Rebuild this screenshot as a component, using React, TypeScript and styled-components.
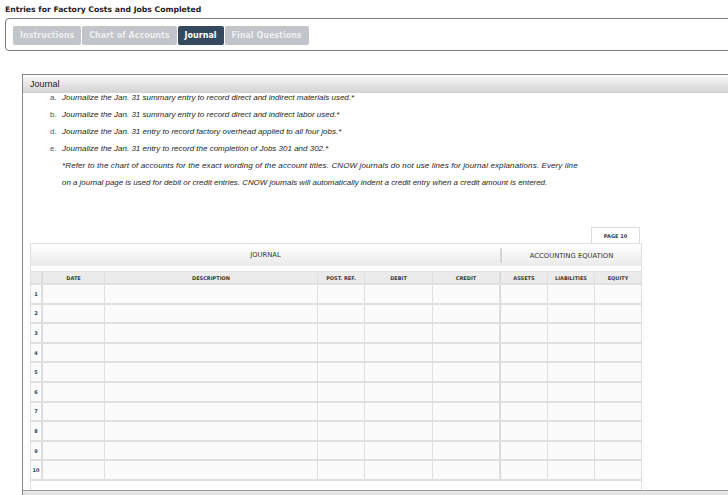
import styled, { createGlobalStyle } from "styled-components";

const GlobalStyle = createGlobalStyle`
  *, *::before, *::after {
    box-sizing: border-box;
  }
  html, body {
    margin: 0;
    padding: 0;
    background: #ffffff;
    overflow: hidden;
  }
  body {
    font-family: "Liberation Sans", Arial, sans-serif;
    color: #222222;
  }
`;

const tabs = ["Instructions", "Chart of Accounts", "Journal", "Final Questions"];

const steps = [
  { mark: "a.", text: "Journalize the Jan. 31 summary entry to record direct and indirect materials used.*" },
  { mark: "b.", text: "Journalize the Jan. 31 summary entry to record direct and indirect labor used.*" },
  { mark: "d.", text: "Journalize the Jan. 31 entry to record factory overhead applied to all four jobs.*" },
  { mark: "e.", text: "Journalize the Jan. 31 entry to record the completion of Jobs 301 and 302.*" },
];

const columns = [
  { label: "", thick: false },
  { label: "DATE", thick: true },
  { label: "DESCRIPTION", thick: false },
  { label: "POST. REF.", thick: false },
  { label: "DEBIT", thick: false },
  { label: "CREDIT", thick: false },
  { label: "ASSETS", thick: true },
  { label: "LIABILITIES", thick: false },
  { label: "EQUITY", thick: false },
];

const rows = Array.from({ length: 10 }, (_, i) => i + 1);

const App = () => {
  return (
    <Page>
      <GlobalStyle />
      <Title>Entries for Factory Costs and Jobs Completed</Title>
      <TabBar>
        {tabs.map((t) => (
          <Tab key={t} $active={t === "Journal"}>
            {t}
          </Tab>
        ))}
      </TabBar>

      <Panel>
        <PanelHeader>Journal</PanelHeader>
        <PanelBody>
          <Steps>
            {steps.map((s) => (
              <Step key={s.mark}>
                <Mark>{s.mark}</Mark>
                <em>{s.text}</em>
              </Step>
            ))}
            <NoteLine $spread>
              *Refer to the chart of accounts for the exact wording of the account titles. CNOW journals do not use
              lines for journal explanations. Every line
            </NoteLine>
            <NoteLine>
              on a journal page is used for debit or credit entries. CNOW journals will automatically indent a credit
              entry when a credit amount is entered.
            </NoteLine>
          </Steps>

          <JournalWrap>
            <PageTab>PAGE 10</PageTab>
            <JournalTable>
              <Banner>
                <BannerCell $w={469}>JOURNAL</BannerCell>
                <BannerCell $w={141} $divider>
                  ACCOUNTING EQUATION
                </BannerCell>
              </Banner>
              <Spacer />
              <Grid>
                {columns.map((c, i) => (
                  <HeadCell key={"h" + i} $thick={c.thick}>
                    {c.label}
                  </HeadCell>
                ))}
                {rows.map((r) =>
                  columns.map((c, i) => (
                    <Cell key={r + "-" + i} $thick={c.thick}>
                      {i === 0 ? r : ""}
                    </Cell>
                  ))
                )}
              </Grid>
            </JournalTable>
          </JournalWrap>
        </PanelBody>
        <PanelFooter />
      </Panel>
    </Page>
  );
};
export default App;

const Page = styled.div`
  padding-top: 4px;
  width: 760px;
`;

const Title = styled.h1`
  margin: 0 0 3px 5px;
  font-family: "DejaVu Sans", Verdana, sans-serif;
  font-size: 7.7px;
  line-height: 11px;
  font-weight: 700;
  color: #222222;
`;

const TabBar = styled.div`
  margin-left: 5px;
  width: 740px;
  border: 1px solid #7d7d7d;
  border-radius: 4px;
  padding: 7px 8px 5px 7px;
  display: flex;
  gap: 1px;
`;

const Tab = styled.div<{ $active?: boolean }>`
  height: 19px;
  line-height: 19px;
  padding: 0 7px;
  border-radius: 2px;
  font-family: "DejaVu Sans", Verdana, sans-serif;
  font-size: 8px;
  font-weight: 700;
  background: ${(p) => (p.$active ? "#34495e" : "#c1c5c9")};
  color: ${(p) => (p.$active ? "#ffffff" : "#eceef0")};
`;

const Panel = styled.div`
  margin: 23px 0 0 22px;
  width: 720px;
  border-top: 1px solid #888888;
  border-left: 1px solid #888888;
`;

const PanelHeader = styled.div`
  height: 18px;
  line-height: 19px;
  padding-left: 7px;
  font-size: 9px;
  color: #222222;
  background: linear-gradient(#fbfbfb, #d2d2d2);
`;

const PanelBody = styled.div`
  height: 397px;
  overflow: hidden;
  background: #ffffff;
`;

const PanelFooter = styled.div`
  height: 6px;
  border-top: 1px solid #9a9a9a;
  background: linear-gradient(#ececec, #dcdcdc);
`;

const Steps = styled.div`
  margin-top: -4px;
  padding-left: 27px;
  font-size: 8px;
  line-height: 17px;
`;

const Step = styled.div`
  display: flex;
  white-space: nowrap;
  em {
    color: #1e1e1e;
  }
`;

const Mark = styled.span`
  width: 12px;
  color: #555555;
`;

const NoteLine = styled.div<{ $spread?: boolean }>`
  padding-left: 12px;
  font-size: ${(p) => (p.$spread ? "8px" : "7.92px")};
  font-style: italic;
  color: #1e1e1e;
  white-space: nowrap;
  letter-spacing: ${(p) => (p.$spread ? "0.12px" : "0")};
`;

const JournalWrap = styled.div`
  margin: 36px 0 0 7px;
  width: 612px;
  display: flex;
  flex-direction: column;
  align-items: flex-end;
`;

const PageTab = styled.div`
  margin-right: 2px;
  width: 49px;
  height: 16px;
  line-height: 16px;
  border: 1px solid #dddddd;
  border-bottom: none;
  text-align: center;
  font-family: "DejaVu Sans", Verdana, sans-serif;
  font-size: 5px;
  font-weight: 700;
  color: #3a3a3a;
`;

const JournalTable = styled.div`
  width: 612px;
  border: 1px solid #e0e0e0;
  border-bottom: none;
  padding-bottom: 20px;
  background: #ffffff;
`;

const Banner = styled.div`
  display: flex;
  height: 22px;
  background: linear-gradient(#ffffff, #eaeaea);
`;

const BannerCell = styled.div<{ $w: number; $divider?: boolean }>`
  width: ${(p) => p.$w}px;
  display: flex;
  align-items: center;
  justify-content: center;
  font-family: "DejaVu Sans", Verdana, sans-serif;
  font-size: 6.8px;
  color: #333333;
  ${(p) => p.$divider && "border-left: 2px solid #d6d6d6; margin: 4px 0 3px;"}
`;

const Spacer = styled.div`
  height: 5px;
`;

const Grid = styled.div`
  display: grid;
  grid-template-columns: 10px 62px 212px 46px 67px 66px 47px 46px 46px;
  grid-auto-rows: 17.6px;
  grid-template-rows: 11px;
  column-gap: 1px;
  row-gap: 2px;
  padding: 1px 0 2px;
  background: #e0e0e0;
`;

const HeadCell = styled.div<{ $thick?: boolean }>`
  background: #ebebeb;
  border-left: ${(p) => (p.$thick ? "1px solid #d8d8d8" : "none")};
  display: flex;
  align-items: center;
  justify-content: center;
  font-family: "DejaVu Sans", Verdana, sans-serif;
  font-size: 5px;
  font-weight: 700;
  color: #3a3a3a;
`;

const Cell = styled.div<{ $thick?: boolean }>`
  background: #fbfbfb;
  border-left: ${(p) => (p.$thick ? "1px solid #d8d8d8" : "none")};
  display: flex;
  align-items: center;
  justify-content: center;
  font-family: "DejaVu Sans", Verdana, sans-serif;
  font-size: 5px;
  font-weight: 700;
  color: #2c3e66;
`;
